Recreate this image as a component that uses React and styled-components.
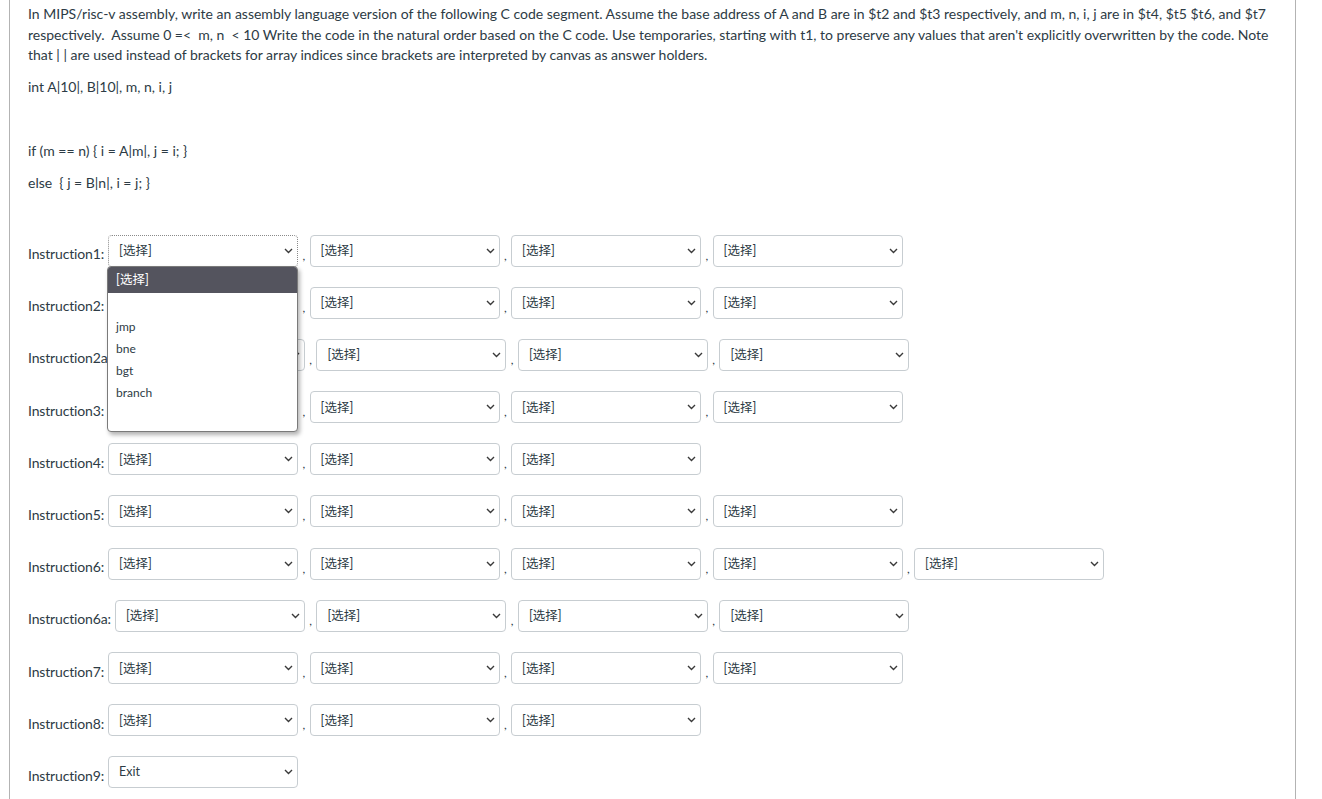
import React from "react";
import styled, { createGlobalStyle } from "styled-components";

const GlobalStyle = createGlobalStyle`
  body {
    margin: 0;
    background: #ffffff;
    font-family: Lato, "Noto Sans CJK SC", sans-serif;
    color: #2d3b45;
  }
`;

const Question = styled.div`
  margin-left: 9px;
  width: 1287px;
  border-left: 1px solid #b3b3b3;
  border-right: 1px solid #b3b3b3;
  padding: 4px 0 40px 18px;
  box-sizing: border-box;
  min-height: 799px;
`;

const Para = styled.p`
  margin: 0 0 11.5px;
  font-size: 14px;
  line-height: 20.5px;
  max-width: 1268px;
`;

const Rows = styled.div`
  display: flex;
  flex-direction: column;
  gap: 20.2px;
  margin-top: 41px;
`;

const Row = styled.div`
  display: flex;
  align-items: center;
  height: 32px;
`;

const Label = styled.span`
  font-size: 14px;
  letter-spacing: -0.15px;
  margin: 6px 4px 0 0;
  white-space: nowrap;
`;

const Comma = styled.span`
  font-size: 12px;
  width: 11.5px;
  text-align: center;
  margin-top: 9px;
  color: #2d3b45;
`;

const SelectWrap = styled.div`
  position: relative;
  flex: none;
  width: 190px;
  height: 32px;
  box-sizing: border-box;
  border: 1px ${(p) => (p.$focus ? "dotted #8a8a8a" : "solid #c7cdd1")};
  border-radius: 4px;
  background: #fff;
  display: flex;
  align-items: center;
  padding: 0 4px 0 10px;
  font-size: 12.5px;
  font-family: Lato, "Noto Sans CJK SC", sans-serif;
`;

const SelectText = styled.span`
  flex: 1;
  margin-top: -2px;
  color: #2d3b45;
`;

const Menu = styled.div`
  position: absolute;
  top: 30px;
  left: -2px;
  width: 191px;
  height: 166px;
  box-sizing: border-box;
  border: 1px solid #7a7a7a;
  border-radius: 4px;
  background: #fff;
  box-shadow: 2px 3px 4px rgba(0, 0, 0, 0.3);
  overflow: hidden;
  z-index: 5;
  font-size: 12px;
`;

const MenuItem = styled.div`
  height: ${(p) => (p.$first ? 26 : p.$blank ? 23 : 22)}px;
  line-height: ${(p) => (p.$first ? 26 : 22)}px;
  padding-left: 8px;
  background: ${(p) => (p.$active ? "#54545e" : "transparent")};
  color: ${(p) => (p.$active ? "#ffffff" : "#2d3b45")};
  font-size: ${(p) => (p.$active ? 12.5 : 12)}px;
`;

const Chevron = () => (
  <svg width="9" height="6" viewBox="0 0 9 6">
    <path d="M1 1l3.5 3.5L8 1" fill="none" stroke="#3a3a3a" strokeWidth="1.4" />
  </svg>
);

const Select = ({ text = "[选择]", focus, open }) => (
  <SelectWrap $focus={focus}>
    <SelectText>{text}</SelectText>
    <Chevron />
    {open && (
      <Menu>
        <MenuItem $first $active>[选择]</MenuItem>
        <MenuItem $blank>{"\u00a0"}</MenuItem>
        <MenuItem>jmp</MenuItem>
        <MenuItem>bne</MenuItem>
        <MenuItem>bgt</MenuItem>
        <MenuItem>branch</MenuItem>
      </Menu>
    )}
  </SelectWrap>
);

const rows = [
  { label: "Instruction1:", count: 4, open: true },
  { label: "Instruction2:", count: 4 },
  { label: "Instruction2a:", count: 4 },
  { label: "Instruction3:", count: 4 },
  { label: "Instruction4:", count: 3 },
  { label: "Instruction5:", count: 4 },
  { label: "Instruction6:", count: 5 },
  { label: "Instruction6a:", count: 4 },
  { label: "Instruction7:", count: 4 },
  { label: "Instruction8:", count: 3 },
  { label: "Instruction9:", count: 1, text: "Exit" },
];

export default function App() {
  return (
    <>
      <GlobalStyle />
      <Question>
        <Para>
          In MIPS/risc-v assembly, write an assembly language version of the following C code segment. Assume the base
          address of A and B are in $t2 and $t3 respectively, and m, n, i, j are in $t4, $t5 $t6, and $t7
          respectively.&nbsp; Assume 0 =&lt;&nbsp; m, n&nbsp; &lt; 10 Write the code in the natural order based on the C
          code. Use temporaries, starting with t1, to preserve any values that aren't explicitly overwritten by the code.
          Note that | | are used instead of brackets for array indices since brackets are interpreted by canvas as answer
          holders.
        </Para>
        <Para>int A|10|, B|10|, m, n, i, j</Para>
        <Para>{"\u00a0"}</Para>
        <Para>if (m == n) {"{"} i = A|m|, j = i; {"}"}</Para>
        <Para>else&nbsp; {"{"} j = B|n|, i = j; {"}"}</Para>
        <Rows>
          {rows.map((r) => (
            <Row key={r.label}>
              <Label>{r.label}</Label>
              {Array.from({ length: r.count }).map((_, i) => (
                <React.Fragment key={i}>
                  {i > 0 && <Comma>,</Comma>}
                  <Select text={r.text} focus={r.open && i === 0} open={r.open && i === 0} />
                </React.Fragment>
              ))}
            </Row>
          ))}
        </Rows>
      </Question>
    </>
  );
}
